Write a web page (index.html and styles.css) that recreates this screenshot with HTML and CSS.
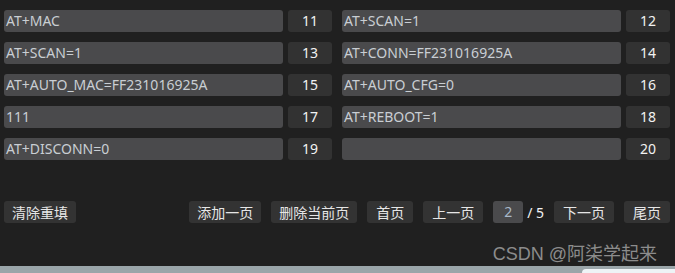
FILE: index.html
```html
<!DOCTYPE html>
<html>
<head>
    <title>AT 指令页</title>
    <link rel="stylesheet" href="styles.css">
</head>
<body>
    <div class="page">
        <div class="grid">
            <div class="cell"><div class="cmd">AT+MAC</div><div class="num">11</div></div>
            <div class="cell"><div class="cmd">AT+SCAN=1</div><div class="num">12</div></div>
            <div class="cell"><div class="cmd">AT+SCAN=1</div><div class="num">13</div></div>
            <div class="cell"><div class="cmd">AT+CONN=FF231016925A</div><div class="num">14</div></div>
            <div class="cell"><div class="cmd">AT+AUTO_MAC=FF231016925A</div><div class="num">15</div></div>
            <div class="cell"><div class="cmd">AT+AUTO_CFG=0</div><div class="num">16</div></div>
            <div class="cell"><div class="cmd">111</div><div class="num">17</div></div>
            <div class="cell"><div class="cmd">AT+REBOOT=1</div><div class="num">18</div></div>
            <div class="cell"><div class="cmd">AT+DISCONN=0</div><div class="num">19</div></div>
            <div class="cell"><div class="cmd"></div><div class="num">20</div></div>
        </div>

        <div class="toolbar">
            <button class="btn">清除重填</button>
            <div class="pager">
                <button class="btn">添加一页</button>
                <button class="btn">删除当前页</button>
                <button class="btn short">首页</button>
                <button class="btn short">上一页</button>
                <div class="page-no">2</div>
                <span class="total">/ 5</span>
                <button class="btn short">下一页</button>
                <button class="btn short">尾页</button>
            </div>
        </div>
    </div>

    <div class="watermark">CSDN @阿柒学起来</div>

    <div class="footer"><div class="tab"></div></div>
</body>
</html>
```

FILE: styles.css
```css
body {
    margin: 0;
    background: #202020;
    font-family: "Noto Sans", "Noto Sans CJK SC", sans-serif;
    font-size: 14px;
    position: relative;
    height: 273px;
    overflow: hidden;
}
.page {
    padding: 10px 5px 0 4px;
}
.grid {
    display: grid;
    grid-template-columns: 1fr 1fr;
    column-gap: 10px;
    row-gap: 10px;
}
.cell {
    display: flex;
    gap: 5px;
}
.cmd {
    flex: 1;
    height: 22px;
    line-height: 22px;
    padding-left: 2px;
    background: #4a4a4c;
    color: #c9ced3;
    border-radius: 3px;
    white-space: nowrap;
}
.num {
    width: 44px;
    height: 22px;
    line-height: 22px;
    text-align: center;
    background: #323232;
    color: #f2f2f2;
    border-radius: 3px;
}
.toolbar {
    margin-top: 41px;
    display: flex;
    justify-content: space-between;
}
.pager {
    display: flex;
    align-items: center;
    gap: 10px;
}
.btn {
    height: 22px;
    padding: 0 8px;
    border: none;
    border-radius: 3px;
    background: #333333;
    color: #e6e6e6;
    font-family: "Noto Sans CJK SC", sans-serif;
    font-size: 14px;
    line-height: 22px;
}
.btn.short {
    padding: 0 9px;
}
.page-no {
    width: 30px;
    height: 22px;
    line-height: 22px;
    text-align: center;
    background: #4a4a4c;
    color: #a9b9c9;
    border-radius: 3px;
}
.total {
    color: #f2f2f2;
    margin-left: -6px;
}
.watermark {
    position: absolute;
    right: 18px;
    top: 239px;
    color: #8c8c8c;
    font-family: "Liberation Sans", "Noto Sans CJK SC", sans-serif;
    font-size: 18px;
}
.footer {
    margin-top: 43px;
    height: 7px;
    background: #9aa5a9;
    padding-top: 3px;
    box-sizing: border-box;
    display: flex;
}
.tab {
    margin-left: 582px;
    flex: 1;
    background: #eef3f6;
    border-radius: 6px 0 0 0;
}
```
